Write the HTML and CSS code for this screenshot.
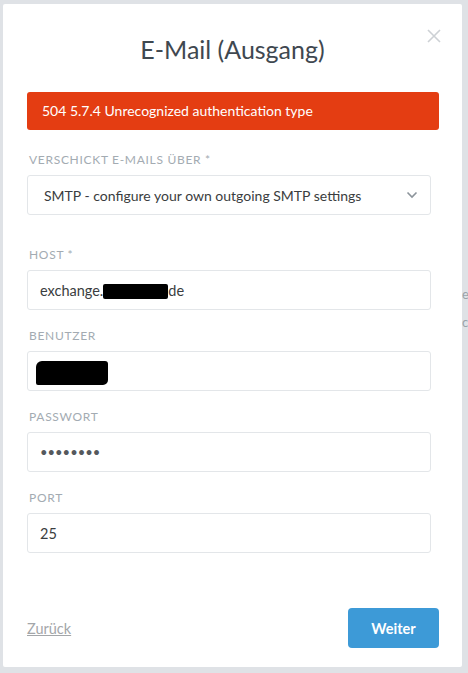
FILE: index.html
```html
<!DOCTYPE html>
<html lang="de">
<head>
<meta charset="utf-8">
<link rel="stylesheet" href="styles.css">
</head>
<body>
<div class="backdrop-text">
  <span class="bt bt1">e</span>
  <span class="bt bt2">c</span>
</div>
<div class="modal">
  <button class="close" aria-label="Schließen">
    <svg width="16" height="16" viewBox="0 0 16 16"><path d="M2 2 L14 14 M14 2 L2 14" stroke="#cdd1d5" stroke-width="1.6" fill="none"/></svg>
  </button>
  <h1 class="title">E-Mail (Ausgang)</h1>
  <div class="alert">504 5.7.4 Unrecognized authentication type</div>

  <div class="field first">
    <label class="label">Verschickt E-Mails über *</label>
    <div class="control select">
      <span>SMTP - configure your own outgoing SMTP settings</span>
      <svg class="chev" width="12" height="8" viewBox="0 0 12 8"><path d="M1.5 1.5 L6 6 L10.5 1.5" stroke="#8c949b" stroke-width="1.6" fill="none"/></svg>
    </div>
  </div>

  <div class="field second">
    <label class="label">Host *</label>
    <div class="control"><span>exchange.</span><span class="redact r1"></span><span>de</span></div>
  </div>

  <div class="field">
    <label class="label">Benutzer</label>
    <div class="control"><span class="redact r2"></span></div>
  </div>

  <div class="field">
    <label class="label">Passwort</label>
    <div class="control pw">••••••••</div>
  </div>

  <div class="field">
    <label class="label">Port</label>
    <div class="control">25</div>
  </div>

  <div class="footer">
    <a class="back" href="#">Zurück</a>
    <button class="btn">Weiter</button>
  </div>
</div>
</body>
</html>
```

FILE: styles.css
```css
* { box-sizing: border-box; }
html, body { margin: 0; padding: 0; }
body {
  width: 468px;
  height: 673px;
  background: #dfe2e6;
  font-family: "Lato", "Noto Sans", sans-serif;
  position: relative;
  overflow: hidden;
  padding: 4px 6px 6px 3px;
}
.backdrop-text .bt {
  position: absolute;
  left: 462px;
  font-size: 13px;
  color: #9aa2a9;
}
.bt1 { top: 286px; }
.bt2 { top: 314px; }
.modal {
  position: relative;
  width: 459px;
  height: 663px;
  background: #fff;
  border-radius: 2px;
  padding: 30px 24px 0 24px;
  display: flex;
  flex-direction: column;
}
.close {
  position: absolute;
  top: 24px;
  right: 20px;
  border: 0;
  background: none;
  padding: 0;
  width: 16px;
  height: 16px;
}
.title {
  margin: 0;
  text-align: center;
  font-weight: 400;
  font-size: 25px;
  line-height: 30px;
  color: #3f4850;
}
.alert {
  margin-top: 28px;
  height: 38px;
  width: 412px;
  background: #e43d12;
  border-radius: 3px;
  color: #fff;
  font-size: 14px;
  line-height: 38px;
  padding-left: 15px;
}
.field { margin-top: 19px; width: 404px; }
.field.first { margin-top: 23px; }
.field.second { margin-top: 33px; }
.label {
  display: block;
  font-size: 12px;
  line-height: 14px;
  letter-spacing: 0.7px;
  text-transform: uppercase;
  color: #a3abb2;
  padding-left: 2px;
  margin-bottom: 8px;
}
.control {
  height: 40px;
  border: 1px solid #e3e6e9;
  border-radius: 3px;
  display: flex;
  align-items: center;
  padding-left: 12px;
  font-size: 14.5px;
  color: #3a3d40;
}
.select { padding-left: 16px; justify-content: space-between; padding-right: 12px; font-size: 14px; }
.chev { flex: none; }
.redact {
  display: inline-block;
  background: #000;
}
.r1 { width: 65px; height: 15px; border-radius: 2px; margin: 2px 0 0 0; }
.r2 { width: 72px; height: 24px; border-radius: 6px 3px 5px 2px; margin-left: -4px; margin-top: 4px; }
.pw { font-size: 13px; letter-spacing: 0px; color: #55595d; }
.footer {
  margin-top: auto;
  margin-bottom: 19px;
  display: flex;
  justify-content: space-between;
  align-items: center;
  width: 412px;
}
.back {
  color: #a3a6a9;
  font-size: 14.5px;
  text-decoration: underline;
}
.btn {
  width: 91px;
  height: 40px;
  border: 0;
  border-radius: 4px;
  background: #3d9ad7;
  color: #fff;
  font-family: inherit;
  font-size: 14.5px;
  font-weight: 700;
}
```
